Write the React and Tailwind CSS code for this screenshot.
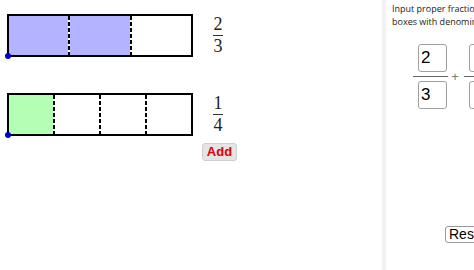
const BARS = [
  { parts: 3, filled: 2, color: 'bg-[#b3b3ff]', num: 2, den: 3 },
  { parts: 4, filled: 1, color: 'bg-[#b3ffb3]', num: 1, den: 4 },
]

function Divider() {
  return (
    <div className="w-[2px] self-stretch bg-[repeating-linear-gradient(to_bottom,#000_0px,#000_4px,transparent_4px,transparent_6px)]" />
  )
}

function FractionBar({ bar }) {
  const cells = []
  for (let i = 0; i < bar.parts; i++) {
    if (i > 0) cells.push(<Divider key={'d' + i} />)
    cells.push(
      <div key={i} className={`flex-1 ${i < bar.filled ? bar.color : 'bg-white'}`} />
    )
  }
  return (
    <div className="flex items-center">
      <div className="relative w-[186px] h-[43px] border-2 border-black flex">
        {cells}
        <span className="absolute left-[-4px] bottom-[-4px] w-[6px] h-[6px] rounded-full bg-[#0000d0]" />
      </div>
      <div className="ml-[19px] flex flex-col items-center w-[12px] font-['Liberation_Serif',serif] text-[18px] leading-[17px] text-[#222]">
        <span>{bar.num}</span>
        <span className="w-[10px] h-[1px] bg-[#333] my-[2px]" />
        <span>{bar.den}</span>
      </div>
    </div>
  )
}

function Box({ value }) {
  return (
    <div className="w-[29px] h-[28px] border border-[#a0a0a0] rounded-[3px] bg-white pl-[2px] text-[17px] leading-[26px] font-['Liberation_Sans',Arial,sans-serif] text-black">
      {value}
    </div>
  )
}

function InputFraction({ num, den }) {
  return (
    <div className="flex flex-col w-[35px]">
      <div className="pl-[5px]"><Box value={num} /></div>
      <div className="h-[1px] bg-[#666] mt-[4px] mb-[4px]" />
      <div className="pl-[5px]"><Box value={den} /></div>
    </div>
  )
}

export default function App() {
  return (
    <div className="w-[474px] h-[270px] overflow-hidden flex bg-white">
      <div className="w-[382px] shrink-0 pl-[7px] pt-[14px]">
        <FractionBar bar={BARS[0]} />
        <div className="h-[36px]" />
        <FractionBar bar={BARS[1]} />
        <button className="ml-[195px] mt-[7px] w-[35px] h-[18px] rounded-[3px] bg-[#e4e4e4] border border-[#cfcfcf] text-[#e00000] font-bold text-[13px] leading-[16px] font-['Liberation_Sans',Arial,sans-serif]">
          Add
        </button>
      </div>
      <div className="w-[4px] shrink-0 bg-[#f2f2f2]" />
      <div className="w-[200px] shrink-0 pl-[6px] pt-[2px]">
        <p className="whitespace-nowrap text-[9px] leading-[13px] text-[#222] font-['Open_Sans',sans-serif]">
          Input proper fractions in the<br />boxes with denominators
        </p>
        <div className="flex items-center ml-[21px] mt-[16px]">
          <InputFraction num="2" den="3" />
          <span className="ml-[2px] w-[10px] text-center text-[13px] leading-[13px] text-[#777] font-['Liberation_Sans',Arial,sans-serif]">+</span>
          <div className="ml-[4px]">
            <InputFraction num="" den="" />
          </div>
        </div>
        <button className="ml-[53px] mt-[117px] h-[17px] px-[3px] rounded-[3px] border border-[#999] bg-white text-[14px] leading-[15px] text-black font-['Liberation_Sans',Arial,sans-serif]">
          Reset
        </button>
      </div>
    </div>
  )
}
